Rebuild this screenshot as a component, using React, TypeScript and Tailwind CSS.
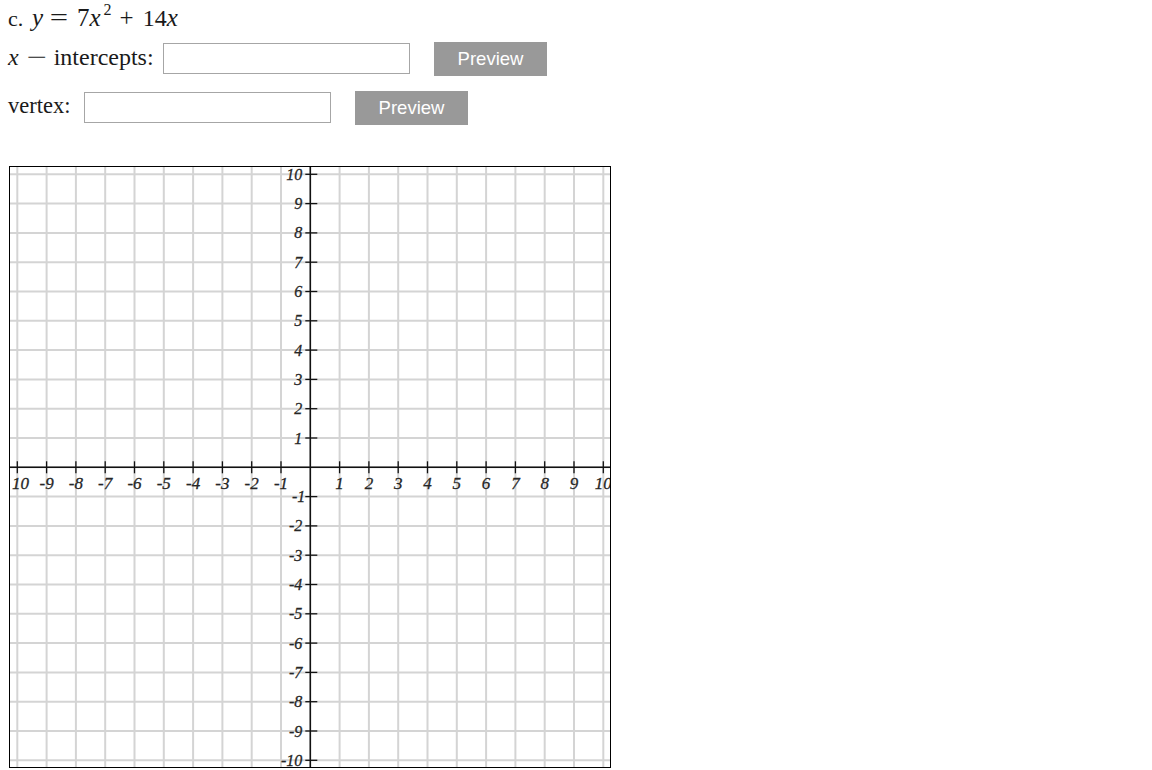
import React from "react";

const serif = { fontFamily: '"Liberation Serif", "Times New Roman", serif' };

const STEP = 29.3;
const C = 301.3;
const SIZE = 602;
const vals = Array.from({ length: 21 }, (_, i) => i - 10);
const LABEL = "#262626";

function xLabel(v: number) {
  if (v === -10) {
    return (
      <text
        key="xl-10"
        x={3}
        y={C + 21.5}
        fontSize={17}
        fontStyle="italic"
        fill={LABEL}
        stroke={LABEL}
        strokeWidth={0.3}
        style={serif}
      >
        10
      </text>
    );
  }
  return (
    <text
      key={`xl${v}`}
      x={C + v * STEP}
      y={C + 21.5}
      textAnchor="middle"
      fontSize={17}
      fontStyle="italic"
      fill={LABEL}
      stroke={LABEL}
      strokeWidth={0.3}
      style={serif}
    >
      {v < 0 ? `-${-v}` : v}
    </text>
  );
}

function Graph() {
  return (
    <svg width={SIZE} height={SIZE} viewBox={`0 0 ${SIZE} ${SIZE}`} className="block">
      <rect x={0} y={0} width={SIZE} height={SIZE} fill="#fff" />
      {vals.map((v) => (
        <g key={`g${v}`}>
          <line x1={C + v * STEP} y1={0} x2={C + v * STEP} y2={SIZE} stroke="#d4d4d4" strokeWidth={2} />
          <line x1={0} y1={C - v * STEP} x2={SIZE} y2={C - v * STEP} stroke="#d4d4d4" strokeWidth={2} />
        </g>
      ))}
      {/* axes */}
      <line x1={0} y1={C} x2={SIZE} y2={C} stroke="#111" strokeWidth={1.5} />
      <line x1={C} y1={0} x2={C} y2={SIZE} stroke="#111" strokeWidth={1.5} />
      {vals
        .filter((v) => v !== 0)
        .map((v) => (
          <g key={`t${v}`}>
            <line x1={C + v * STEP} y1={C - 6} x2={C + v * STEP} y2={C + 6} stroke="#111" strokeWidth={1.3} />
            <line x1={C - 5} y1={C - v * STEP} x2={C + 7} y2={C - v * STEP} stroke="#111" strokeWidth={1.3} />
            {xLabel(v)}
            <text
              x={v === -1 ? C - 5 : C - 8}
              y={C - v * STEP + 5.5}
              textAnchor="end"
              fontSize={16}
              fontStyle="italic"
              fill={LABEL}
              stroke={LABEL}
              strokeWidth={0.3}
              style={serif}
            >
              {v < 0 ? `-${-v}` : v}
            </text>
          </g>
        ))}
      <rect x={0.5} y={0.5} width={SIZE - 1} height={SIZE - 1} fill="none" stroke="#000" strokeWidth={1} />
    </svg>
  );
}

function PreviewButton() {
  return (
    <button
      className="h-[34px] w-[113px] bg-[#999999] text-[18.5px] text-white"
      style={{ fontFamily: '"Liberation Sans", Arial, sans-serif' }}
    >
      Preview
    </button>
  );
}

export default function App() {
  return (
    <div className="min-h-[770px] w-[1152px] bg-white pl-[8px] text-[#1a1a1a]" style={serif}>
      {/* equation */}
      <div className="flex h-[33px] items-baseline pt-[3px] leading-[30px]">
        <span className="w-[24px] text-[22px]">c.</span>
        <span className="w-[16px] text-[25px] italic">y</span>
        <span className="inline-block w-[22px] scale-x-[1.3] text-center text-[25px]">=</span>
        <span className="ml-[7px] text-[25px]">7</span>
        <span className="text-[25px] italic">x</span>
        <span className="relative -top-[11px] ml-[3px] text-[16px]">2</span>
        <span className="ml-[8px] text-[25px]">+</span>
        <span className="ml-[9px] text-[24px]">14</span>
        <span className="text-[25px] italic">x</span>
      </div>

      {/* x-intercepts row */}
      <div className="mt-[9px] flex items-start">
        <div className="flex w-[155px] items-baseline text-[24px] leading-[30px]">
          <span className="italic">x</span>
          <span className="ml-[11px] inline-block w-[13px] scale-x-150 text-center">−</span>
          <span className="ml-[11px]">intercepts:</span>
        </div>
        <input type="text" className="mt-[1px] h-[31px] w-[247px] border border-[#a6a6a6] bg-white outline-none" />
        <div className="ml-[24px]">
          <PreviewButton />
        </div>
      </div>

      {/* vertex row */}
      <div className="mt-[15px] flex items-start">
        <div className="w-[76px] text-[22.5px] leading-[30px]">vertex:</div>
        <input type="text" className="mt-[1px] h-[31px] w-[247px] border border-[#a6a6a6] bg-white outline-none" />
        <div className="ml-[24px]">
          <PreviewButton />
        </div>
      </div>

      {/* coordinate grid */}
      <div className="ml-[1px] mt-[41px]">
        <Graph />
      </div>
    </div>
  );
}
